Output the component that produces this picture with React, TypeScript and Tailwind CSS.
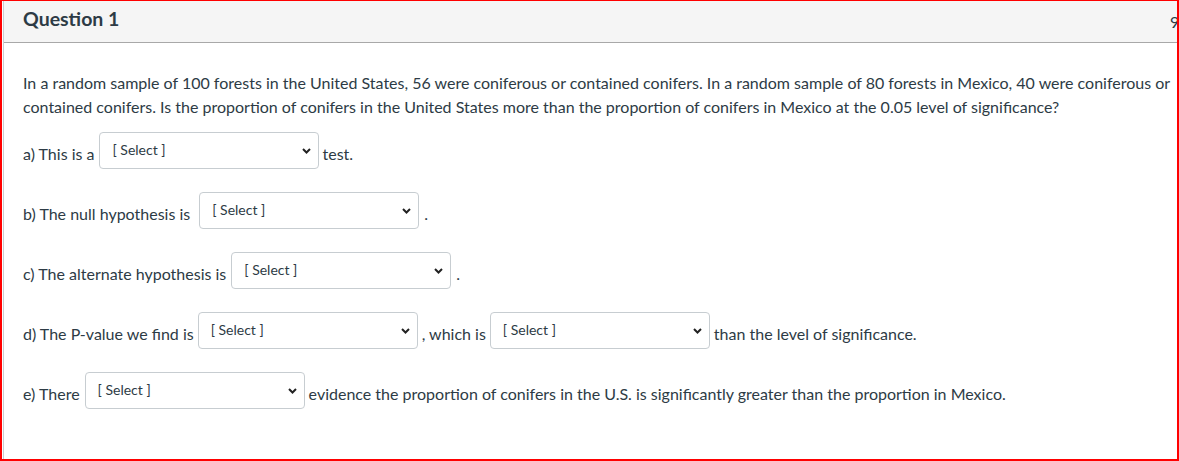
import { ReactNode } from "react";

const Chevron = () => (
  <svg width="9" height="6" viewBox="0 0 9 6" className="shrink-0">
    <polyline points="1,1 4.5,4.5 8,1" fill="none" stroke="#222" strokeWidth="2" />
  </svg>
);

const FakeSelect = ({ className = "" }: { className?: string }) => (
  <div
    className={`flex h-[37px] w-[220px] shrink-0 items-start justify-between rounded-[4px] border border-[#c7cdd1] bg-white pl-[12px] pr-[7px] ${className}`}
  >
    <span className="pt-[8px] text-[14px] leading-[18px] text-[#2d3b45]">[ Select ]</span>
    <span className="pt-[15px]">
      <Chevron />
    </span>
  </div>
);

const Txt = ({ children, className = "" }: { children: ReactNode; className?: string }) => (
  <span className={`whitespace-nowrap pt-[7px] ${className}`}>{children}</span>
);

export default function App() {
  return (
    <div
      className="h-[461px] w-[1179px] overflow-hidden border-t border-r-2 border-b-2 border-l-2 border-[#ff0000] bg-white pl-[1px] text-[#2d3b45]"
      style={{ fontFamily: "Lato, 'Liberation Sans', sans-serif" }}
    >
      <div className="h-full w-[1222px] border-l border-[#c7cdd1] bg-white">
        <div className="flex h-[42px] items-center justify-between border-b border-[#a8a8a8] bg-[#f5f5f5] pl-[19px] pr-[20px]">
          <h2 className="pb-[5px] text-[19.5px] font-bold">Question 1</h2>
          <span className="text-[16px]">9 pts</span>
        </div>
        <div className="pl-[19px] pt-[28px] text-[16px] leading-[24px]">
          <p className="whitespace-nowrap">
            In a random sample of 100 forests in the United States, 56 were coniferous or contained conifers. In a random
            sample of 80 forests in Mexico, 40 were coniferous or
            <br />
            contained conifers. Is the proportion of conifers in the United States more than the proportion of conifers in
            Mexico at the 0.05 level of significance?
          </p>

          <div className="mt-[13px] flex flex-col gap-[23px]">
            <div className="flex items-center">
              <Txt>a) This is a</Txt>
              <FakeSelect className="ml-[5px]" />
              <Txt className="ml-[3px]">test.</Txt>
            </div>
            <div className="flex items-center">
              <Txt>b) The null hypothesis is</Txt>
              <FakeSelect className="ml-[9px]" />
              <Txt className="ml-[5px]">.</Txt>
            </div>
            <div className="flex items-center">
              <Txt>c) The alternate hypothesis is</Txt>
              <FakeSelect className="ml-[5px]" />
              <Txt className="ml-[5px]">.</Txt>
            </div>
            <div className="flex items-center">
              <Txt>d) The P-value we find is</Txt>
              <FakeSelect className="ml-[4px]" />
              <Txt className="ml-[4px]">, which is</Txt>
              <FakeSelect className="ml-[4px]" />
              <Txt className="ml-[4px]">than the level of significance.</Txt>
            </div>
            <div className="flex items-center">
              <Txt>e) There</Txt>
              <FakeSelect className="ml-[5px]" />
              <Txt className="ml-[4px]">
                evidence the proportion of conifers in the U.S. is significantly greater than the proportion in Mexico.
              </Txt>
            </div>
          </div>
        </div>
      </div>
    </div>
  );
}
